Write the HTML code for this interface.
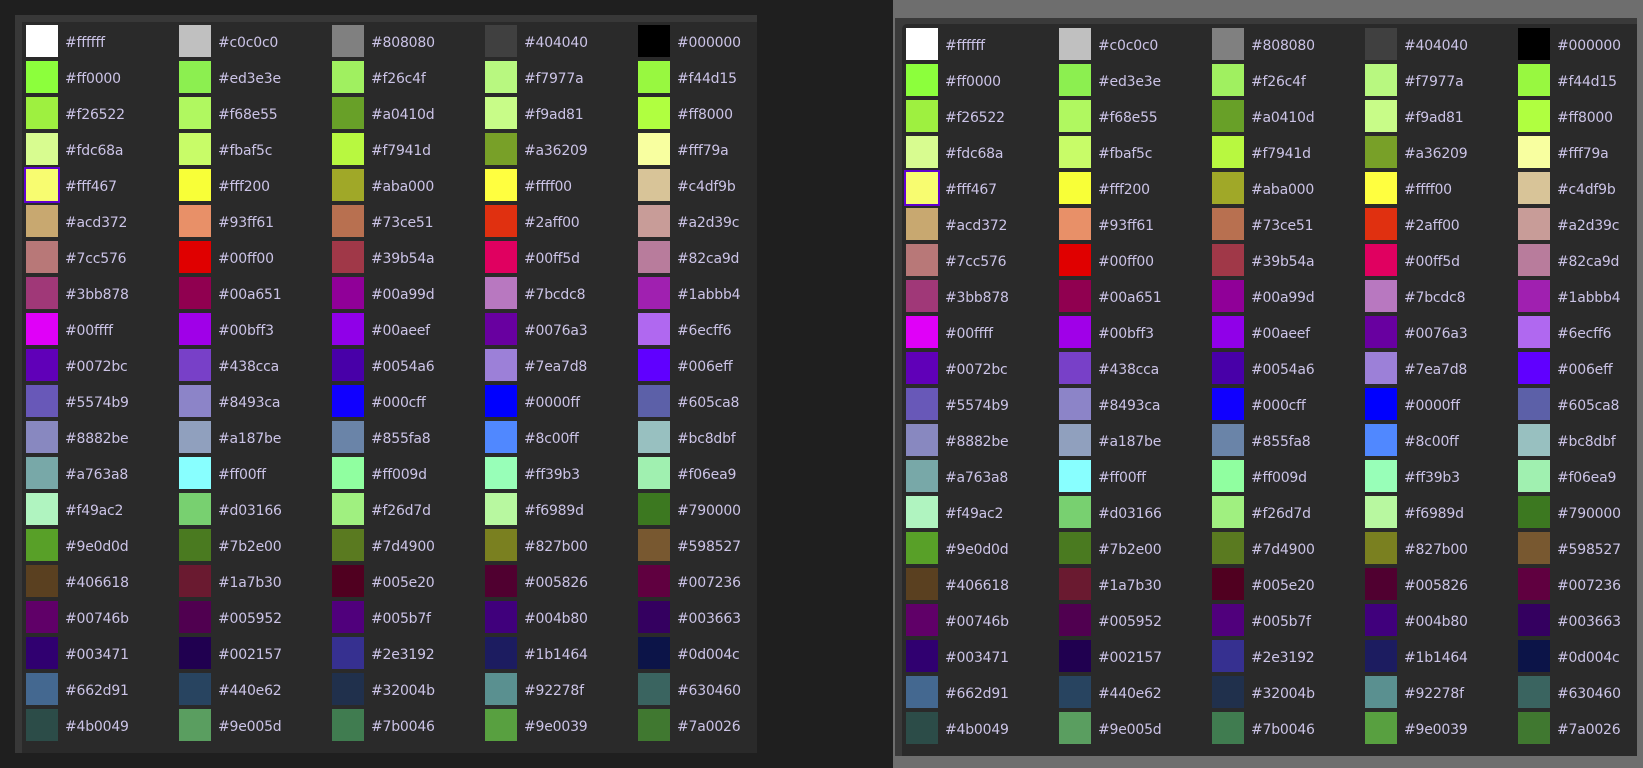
<!DOCTYPE html>
<html><head><meta charset="utf-8"><style>
*{margin:0;padding:0;box-sizing:border-box}
body{width:1643px;height:768px;background:#1f1f1f;position:relative;overflow:hidden;font-family:"DejaVu Sans","Liberation Sans",sans-serif;}
.gray{position:absolute;left:893px;top:0;width:750px;height:768px;background:#6e6e6e}
.frame{position:absolute;background:#383838}
.inner{position:absolute;background:#2a2a2a}
.grid{position:absolute;display:grid;grid-template-columns:repeat(5,153px);grid-auto-rows:36px}
.c{display:flex;align-items:flex-start;position:relative}
.s{width:32px;height:32px;flex:none}
.t{color:#cbc3e6;font-size:14px;line-height:36px;margin-left:7px;letter-spacing:-0.2px}
.sel{outline:2px solid #6000d0;outline-offset:0}
</style></head><body>
<div class="gray"></div>
<div class="frame" style="left:15px;top:15px;width:742px;height:738px"></div>
<div class="inner" style="left:22px;top:22px;width:735px;height:731px"></div>
<div class="frame" style="left:895px;top:18px;width:742px;height:738px;background:#3a3a3a"></div>
<div class="inner" style="left:902px;top:24px;width:735px;height:732px;border-top-left-radius:5px"></div>

<div class="grid" style="left:26px;top:25px">
<div class="c"><div class="s" style="background:#ffffff"></div><span class="t">#ffffff</span></div>
<div class="c"><div class="s" style="background:#c0c0c0"></div><span class="t">#c0c0c0</span></div>
<div class="c"><div class="s" style="background:#808080"></div><span class="t">#808080</span></div>
<div class="c"><div class="s" style="background:#404040"></div><span class="t">#404040</span></div>
<div class="c"><div class="s" style="background:#000000"></div><span class="t">#000000</span></div>
<div class="c"><div class="s" style="background:#8cff3c"></div><span class="t">#ff0000</span></div>
<div class="c"><div class="s" style="background:#8cef50"></div><span class="t">#ed3e3e</span></div>
<div class="c"><div class="s" style="background:#a0f060"></div><span class="t">#f26c4f</span></div>
<div class="c"><div class="s" style="background:#b8f880"></div><span class="t">#f7977a</span></div>
<div class="c"><div class="s" style="background:#98f840"></div><span class="t">#f44d15</span></div>
<div class="c"><div class="s" style="background:#9ef040"></div><span class="t">#f26522</span></div>
<div class="c"><div class="s" style="background:#b0f860"></div><span class="t">#f68e55</span></div>
<div class="c"><div class="s" style="background:#68a028"></div><span class="t">#a0410d</span></div>
<div class="c"><div class="s" style="background:#c8fc88"></div><span class="t">#f9ad81</span></div>
<div class="c"><div class="s" style="background:#b0ff40"></div><span class="t">#ff8000</span></div>
<div class="c"><div class="s" style="background:#d8fc90"></div><span class="t">#fdc68a</span></div>
<div class="c"><div class="s" style="background:#c8fc68"></div><span class="t">#fbaf5c</span></div>
<div class="c"><div class="s" style="background:#b8f840"></div><span class="t">#f7941d</span></div>
<div class="c"><div class="s" style="background:#78a028"></div><span class="t">#a36209</span></div>
<div class="c"><div class="s" style="background:#f8ffa0"></div><span class="t">#fff79a</span></div>
<div class="c"><div class="s sel" style="background:#f8fc70"></div><span class="t">#fff467</span></div>
<div class="c"><div class="s" style="background:#f8ff38"></div><span class="t">#fff200</span></div>
<div class="c"><div class="s" style="background:#a0a828"></div><span class="t">#aba000</span></div>
<div class="c"><div class="s" style="background:#ffff40"></div><span class="t">#ffff00</span></div>
<div class="c"><div class="s" style="background:#d8c498"></div><span class="t">#c4df9b</span></div>
<div class="c"><div class="s" style="background:#c8a870"></div><span class="t">#acd372</span></div>
<div class="c"><div class="s" style="background:#e89068"></div><span class="t">#93ff61</span></div>
<div class="c"><div class="s" style="background:#b87050"></div><span class="t">#73ce51</span></div>
<div class="c"><div class="s" style="background:#e03010"></div><span class="t">#2aff00</span></div>
<div class="c"><div class="s" style="background:#c89c98"></div><span class="t">#a2d39c</span></div>
<div class="c"><div class="s" style="background:#b87878"></div><span class="t">#7cc576</span></div>
<div class="c"><div class="s" style="background:#e00000"></div><span class="t">#00ff00</span></div>
<div class="c"><div class="s" style="background:#a03848"></div><span class="t">#39b54a</span></div>
<div class="c"><div class="s" style="background:#e00060"></div><span class="t">#00ff5d</span></div>
<div class="c"><div class="s" style="background:#b87c9c"></div><span class="t">#82ca9d</span></div>
<div class="c"><div class="s" style="background:#a03878"></div><span class="t">#3bb878</span></div>
<div class="c"><div class="s" style="background:#900050"></div><span class="t">#00a651</span></div>
<div class="c"><div class="s" style="background:#900098"></div><span class="t">#00a99d</span></div>
<div class="c"><div class="s" style="background:#b878c0"></div><span class="t">#7bcdc8</span></div>
<div class="c"><div class="s" style="background:#a020b0"></div><span class="t">#1abbb4</span></div>
<div class="c"><div class="s" style="background:#e000f8"></div><span class="t">#00ffff</span></div>
<div class="c"><div class="s" style="background:#a000e8"></div><span class="t">#00bff3</span></div>
<div class="c"><div class="s" style="background:#9000e8"></div><span class="t">#00aeef</span></div>
<div class="c"><div class="s" style="background:#6800a0"></div><span class="t">#0076a3</span></div>
<div class="c"><div class="s" style="background:#b068f0"></div><span class="t">#6ecff6</span></div>
<div class="c"><div class="s" style="background:#6000b8"></div><span class="t">#0072bc</span></div>
<div class="c"><div class="s" style="background:#7840c8"></div><span class="t">#438cca</span></div>
<div class="c"><div class="s" style="background:#4800a8"></div><span class="t">#0054a6</span></div>
<div class="c"><div class="s" style="background:#9c80d8"></div><span class="t">#7ea7d8</span></div>
<div class="c"><div class="s" style="background:#6000ff"></div><span class="t">#006eff</span></div>
<div class="c"><div class="s" style="background:#6858b8"></div><span class="t">#5574b9</span></div>
<div class="c"><div class="s" style="background:#8c84c8"></div><span class="t">#8493ca</span></div>
<div class="c"><div class="s" style="background:#1000ff"></div><span class="t">#000cff</span></div>
<div class="c"><div class="s" style="background:#0000ff"></div><span class="t">#0000ff</span></div>
<div class="c"><div class="s" style="background:#5c60a8"></div><span class="t">#605ca8</span></div>
<div class="c"><div class="s" style="background:#8888c0"></div><span class="t">#8882be</span></div>
<div class="c"><div class="s" style="background:#90a0be"></div><span class="t">#a187be</span></div>
<div class="c"><div class="s" style="background:#6a84a8"></div><span class="t">#855fa8</span></div>
<div class="c"><div class="s" style="background:#5088ff"></div><span class="t">#8c00ff</span></div>
<div class="c"><div class="s" style="background:#98c0c0"></div><span class="t">#bc8dbf</span></div>
<div class="c"><div class="s" style="background:#78a8a8"></div><span class="t">#a763a8</span></div>
<div class="c"><div class="s" style="background:#88ffff"></div><span class="t">#ff00ff</span></div>
<div class="c"><div class="s" style="background:#90ffa0"></div><span class="t">#ff009d</span></div>
<div class="c"><div class="s" style="background:#98ffb8"></div><span class="t">#ff39b3</span></div>
<div class="c"><div class="s" style="background:#a0f0b0"></div><span class="t">#f06ea9</span></div>
<div class="c"><div class="s" style="background:#b0f4c0"></div><span class="t">#f49ac2</span></div>
<div class="c"><div class="s" style="background:#78d070"></div><span class="t">#d03166</span></div>
<div class="c"><div class="s" style="background:#a0f080"></div><span class="t">#f26d7d</span></div>
<div class="c"><div class="s" style="background:#b8f8a0"></div><span class="t">#f6989d</span></div>
<div class="c"><div class="s" style="background:#3c7820"></div><span class="t">#790000</span></div>
<div class="c"><div class="s" style="background:#58a028"></div><span class="t">#9e0d0d</span></div>
<div class="c"><div class="s" style="background:#4a7a20"></div><span class="t">#7b2e00</span></div>
<div class="c"><div class="s" style="background:#5a7a20"></div><span class="t">#7d4900</span></div>
<div class="c"><div class="s" style="background:#7a8020"></div><span class="t">#827b00</span></div>
<div class="c"><div class="s" style="background:#785830"></div><span class="t">#598527</span></div>
<div class="c"><div class="s" style="background:#5a4020"></div><span class="t">#406618</span></div>
<div class="c"><div class="s" style="background:#6a1a30"></div><span class="t">#1a7b30</span></div>
<div class="c"><div class="s" style="background:#500020"></div><span class="t">#005e20</span></div>
<div class="c"><div class="s" style="background:#500030"></div><span class="t">#005826</span></div>
<div class="c"><div class="s" style="background:#600040"></div><span class="t">#007236</span></div>
<div class="c"><div class="s" style="background:#600068"></div><span class="t">#00746b</span></div>
<div class="c"><div class="s" style="background:#500050"></div><span class="t">#005952</span></div>
<div class="c"><div class="s" style="background:#50007c"></div><span class="t">#005b7f</span></div>
<div class="c"><div class="s" style="background:#40007c"></div><span class="t">#004b80</span></div>
<div class="c"><div class="s" style="background:#340060"></div><span class="t">#003663</span></div>
<div class="c"><div class="s" style="background:#300070"></div><span class="t">#003471</span></div>
<div class="c"><div class="s" style="background:#200050"></div><span class="t">#002157</span></div>
<div class="c"><div class="s" style="background:#363090"></div><span class="t">#2e3192</span></div>
<div class="c"><div class="s" style="background:#1c1c60"></div><span class="t">#1b1464</span></div>
<div class="c"><div class="s" style="background:#0c1448"></div><span class="t">#0d004c</span></div>
<div class="c"><div class="s" style="background:#446890"></div><span class="t">#662d91</span></div>
<div class="c"><div class="s" style="background:#284460"></div><span class="t">#440e62</span></div>
<div class="c"><div class="s" style="background:#20304c"></div><span class="t">#32004b</span></div>
<div class="c"><div class="s" style="background:#5a9090"></div><span class="t">#92278f</span></div>
<div class="c"><div class="s" style="background:#3a6460"></div><span class="t">#630460</span></div>
<div class="c"><div class="s" style="background:#2c4c48"></div><span class="t">#4b0049</span></div>
<div class="c"><div class="s" style="background:#5a9e60"></div><span class="t">#9e005d</span></div>
<div class="c"><div class="s" style="background:#407c50"></div><span class="t">#7b0046</span></div>
<div class="c"><div class="s" style="background:#58a040"></div><span class="t">#9e0039</span></div>
<div class="c"><div class="s" style="background:#407830"></div><span class="t">#7a0026</span></div>
</div>

<div class="grid" style="left:906px;top:28px">
<div class="c"><div class="s" style="background:#ffffff"></div><span class="t">#ffffff</span></div>
<div class="c"><div class="s" style="background:#c0c0c0"></div><span class="t">#c0c0c0</span></div>
<div class="c"><div class="s" style="background:#808080"></div><span class="t">#808080</span></div>
<div class="c"><div class="s" style="background:#404040"></div><span class="t">#404040</span></div>
<div class="c"><div class="s" style="background:#000000"></div><span class="t">#000000</span></div>
<div class="c"><div class="s" style="background:#8cff3c"></div><span class="t">#ff0000</span></div>
<div class="c"><div class="s" style="background:#8cef50"></div><span class="t">#ed3e3e</span></div>
<div class="c"><div class="s" style="background:#a0f060"></div><span class="t">#f26c4f</span></div>
<div class="c"><div class="s" style="background:#b8f880"></div><span class="t">#f7977a</span></div>
<div class="c"><div class="s" style="background:#98f840"></div><span class="t">#f44d15</span></div>
<div class="c"><div class="s" style="background:#9ef040"></div><span class="t">#f26522</span></div>
<div class="c"><div class="s" style="background:#b0f860"></div><span class="t">#f68e55</span></div>
<div class="c"><div class="s" style="background:#68a028"></div><span class="t">#a0410d</span></div>
<div class="c"><div class="s" style="background:#c8fc88"></div><span class="t">#f9ad81</span></div>
<div class="c"><div class="s" style="background:#b0ff40"></div><span class="t">#ff8000</span></div>
<div class="c"><div class="s" style="background:#d8fc90"></div><span class="t">#fdc68a</span></div>
<div class="c"><div class="s" style="background:#c8fc68"></div><span class="t">#fbaf5c</span></div>
<div class="c"><div class="s" style="background:#b8f840"></div><span class="t">#f7941d</span></div>
<div class="c"><div class="s" style="background:#78a028"></div><span class="t">#a36209</span></div>
<div class="c"><div class="s" style="background:#f8ffa0"></div><span class="t">#fff79a</span></div>
<div class="c"><div class="s sel" style="background:#f8fc70"></div><span class="t">#fff467</span></div>
<div class="c"><div class="s" style="background:#f8ff38"></div><span class="t">#fff200</span></div>
<div class="c"><div class="s" style="background:#a0a828"></div><span class="t">#aba000</span></div>
<div class="c"><div class="s" style="background:#ffff40"></div><span class="t">#ffff00</span></div>
<div class="c"><div class="s" style="background:#d8c498"></div><span class="t">#c4df9b</span></div>
<div class="c"><div class="s" style="background:#c8a870"></div><span class="t">#acd372</span></div>
<div class="c"><div class="s" style="background:#e89068"></div><span class="t">#93ff61</span></div>
<div class="c"><div class="s" style="background:#b87050"></div><span class="t">#73ce51</span></div>
<div class="c"><div class="s" style="background:#e03010"></div><span class="t">#2aff00</span></div>
<div class="c"><div class="s" style="background:#c89c98"></div><span class="t">#a2d39c</span></div>
<div class="c"><div class="s" style="background:#b87878"></div><span class="t">#7cc576</span></div>
<div class="c"><div class="s" style="background:#e00000"></div><span class="t">#00ff00</span></div>
<div class="c"><div class="s" style="background:#a03848"></div><span class="t">#39b54a</span></div>
<div class="c"><div class="s" style="background:#e00060"></div><span class="t">#00ff5d</span></div>
<div class="c"><div class="s" style="background:#b87c9c"></div><span class="t">#82ca9d</span></div>
<div class="c"><div class="s" style="background:#a03878"></div><span class="t">#3bb878</span></div>
<div class="c"><div class="s" style="background:#900050"></div><span class="t">#00a651</span></div>
<div class="c"><div class="s" style="background:#900098"></div><span class="t">#00a99d</span></div>
<div class="c"><div class="s" style="background:#b878c0"></div><span class="t">#7bcdc8</span></div>
<div class="c"><div class="s" style="background:#a020b0"></div><span class="t">#1abbb4</span></div>
<div class="c"><div class="s" style="background:#e000f8"></div><span class="t">#00ffff</span></div>
<div class="c"><div class="s" style="background:#a000e8"></div><span class="t">#00bff3</span></div>
<div class="c"><div class="s" style="background:#9000e8"></div><span class="t">#00aeef</span></div>
<div class="c"><div class="s" style="background:#6800a0"></div><span class="t">#0076a3</span></div>
<div class="c"><div class="s" style="background:#b068f0"></div><span class="t">#6ecff6</span></div>
<div class="c"><div class="s" style="background:#6000b8"></div><span class="t">#0072bc</span></div>
<div class="c"><div class="s" style="background:#7840c8"></div><span class="t">#438cca</span></div>
<div class="c"><div class="s" style="background:#4800a8"></div><span class="t">#0054a6</span></div>
<div class="c"><div class="s" style="background:#9c80d8"></div><span class="t">#7ea7d8</span></div>
<div class="c"><div class="s" style="background:#6000ff"></div><span class="t">#006eff</span></div>
<div class="c"><div class="s" style="background:#6858b8"></div><span class="t">#5574b9</span></div>
<div class="c"><div class="s" style="background:#8c84c8"></div><span class="t">#8493ca</span></div>
<div class="c"><div class="s" style="background:#1000ff"></div><span class="t">#000cff</span></div>
<div class="c"><div class="s" style="background:#0000ff"></div><span class="t">#0000ff</span></div>
<div class="c"><div class="s" style="background:#5c60a8"></div><span class="t">#605ca8</span></div>
<div class="c"><div class="s" style="background:#8888c0"></div><span class="t">#8882be</span></div>
<div class="c"><div class="s" style="background:#90a0be"></div><span class="t">#a187be</span></div>
<div class="c"><div class="s" style="background:#6a84a8"></div><span class="t">#855fa8</span></div>
<div class="c"><div class="s" style="background:#5088ff"></div><span class="t">#8c00ff</span></div>
<div class="c"><div class="s" style="background:#98c0c0"></div><span class="t">#bc8dbf</span></div>
<div class="c"><div class="s" style="background:#78a8a8"></div><span class="t">#a763a8</span></div>
<div class="c"><div class="s" style="background:#88ffff"></div><span class="t">#ff00ff</span></div>
<div class="c"><div class="s" style="background:#90ffa0"></div><span class="t">#ff009d</span></div>
<div class="c"><div class="s" style="background:#98ffb8"></div><span class="t">#ff39b3</span></div>
<div class="c"><div class="s" style="background:#a0f0b0"></div><span class="t">#f06ea9</span></div>
<div class="c"><div class="s" style="background:#b0f4c0"></div><span class="t">#f49ac2</span></div>
<div class="c"><div class="s" style="background:#78d070"></div><span class="t">#d03166</span></div>
<div class="c"><div class="s" style="background:#a0f080"></div><span class="t">#f26d7d</span></div>
<div class="c"><div class="s" style="background:#b8f8a0"></div><span class="t">#f6989d</span></div>
<div class="c"><div class="s" style="background:#3c7820"></div><span class="t">#790000</span></div>
<div class="c"><div class="s" style="background:#58a028"></div><span class="t">#9e0d0d</span></div>
<div class="c"><div class="s" style="background:#4a7a20"></div><span class="t">#7b2e00</span></div>
<div class="c"><div class="s" style="background:#5a7a20"></div><span class="t">#7d4900</span></div>
<div class="c"><div class="s" style="background:#7a8020"></div><span class="t">#827b00</span></div>
<div class="c"><div class="s" style="background:#785830"></div><span class="t">#598527</span></div>
<div class="c"><div class="s" style="background:#5a4020"></div><span class="t">#406618</span></div>
<div class="c"><div class="s" style="background:#6a1a30"></div><span class="t">#1a7b30</span></div>
<div class="c"><div class="s" style="background:#500020"></div><span class="t">#005e20</span></div>
<div class="c"><div class="s" style="background:#500030"></div><span class="t">#005826</span></div>
<div class="c"><div class="s" style="background:#600040"></div><span class="t">#007236</span></div>
<div class="c"><div class="s" style="background:#600068"></div><span class="t">#00746b</span></div>
<div class="c"><div class="s" style="background:#500050"></div><span class="t">#005952</span></div>
<div class="c"><div class="s" style="background:#50007c"></div><span class="t">#005b7f</span></div>
<div class="c"><div class="s" style="background:#40007c"></div><span class="t">#004b80</span></div>
<div class="c"><div class="s" style="background:#340060"></div><span class="t">#003663</span></div>
<div class="c"><div class="s" style="background:#300070"></div><span class="t">#003471</span></div>
<div class="c"><div class="s" style="background:#200050"></div><span class="t">#002157</span></div>
<div class="c"><div class="s" style="background:#363090"></div><span class="t">#2e3192</span></div>
<div class="c"><div class="s" style="background:#1c1c60"></div><span class="t">#1b1464</span></div>
<div class="c"><div class="s" style="background:#0c1448"></div><span class="t">#0d004c</span></div>
<div class="c"><div class="s" style="background:#446890"></div><span class="t">#662d91</span></div>
<div class="c"><div class="s" style="background:#284460"></div><span class="t">#440e62</span></div>
<div class="c"><div class="s" style="background:#20304c"></div><span class="t">#32004b</span></div>
<div class="c"><div class="s" style="background:#5a9090"></div><span class="t">#92278f</span></div>
<div class="c"><div class="s" style="background:#3a6460"></div><span class="t">#630460</span></div>
<div class="c"><div class="s" style="background:#2c4c48"></div><span class="t">#4b0049</span></div>
<div class="c"><div class="s" style="background:#5a9e60"></div><span class="t">#9e005d</span></div>
<div class="c"><div class="s" style="background:#407c50"></div><span class="t">#7b0046</span></div>
<div class="c"><div class="s" style="background:#58a040"></div><span class="t">#9e0039</span></div>
<div class="c"><div class="s" style="background:#407830"></div><span class="t">#7a0026</span></div>
</div>
</body></html>
